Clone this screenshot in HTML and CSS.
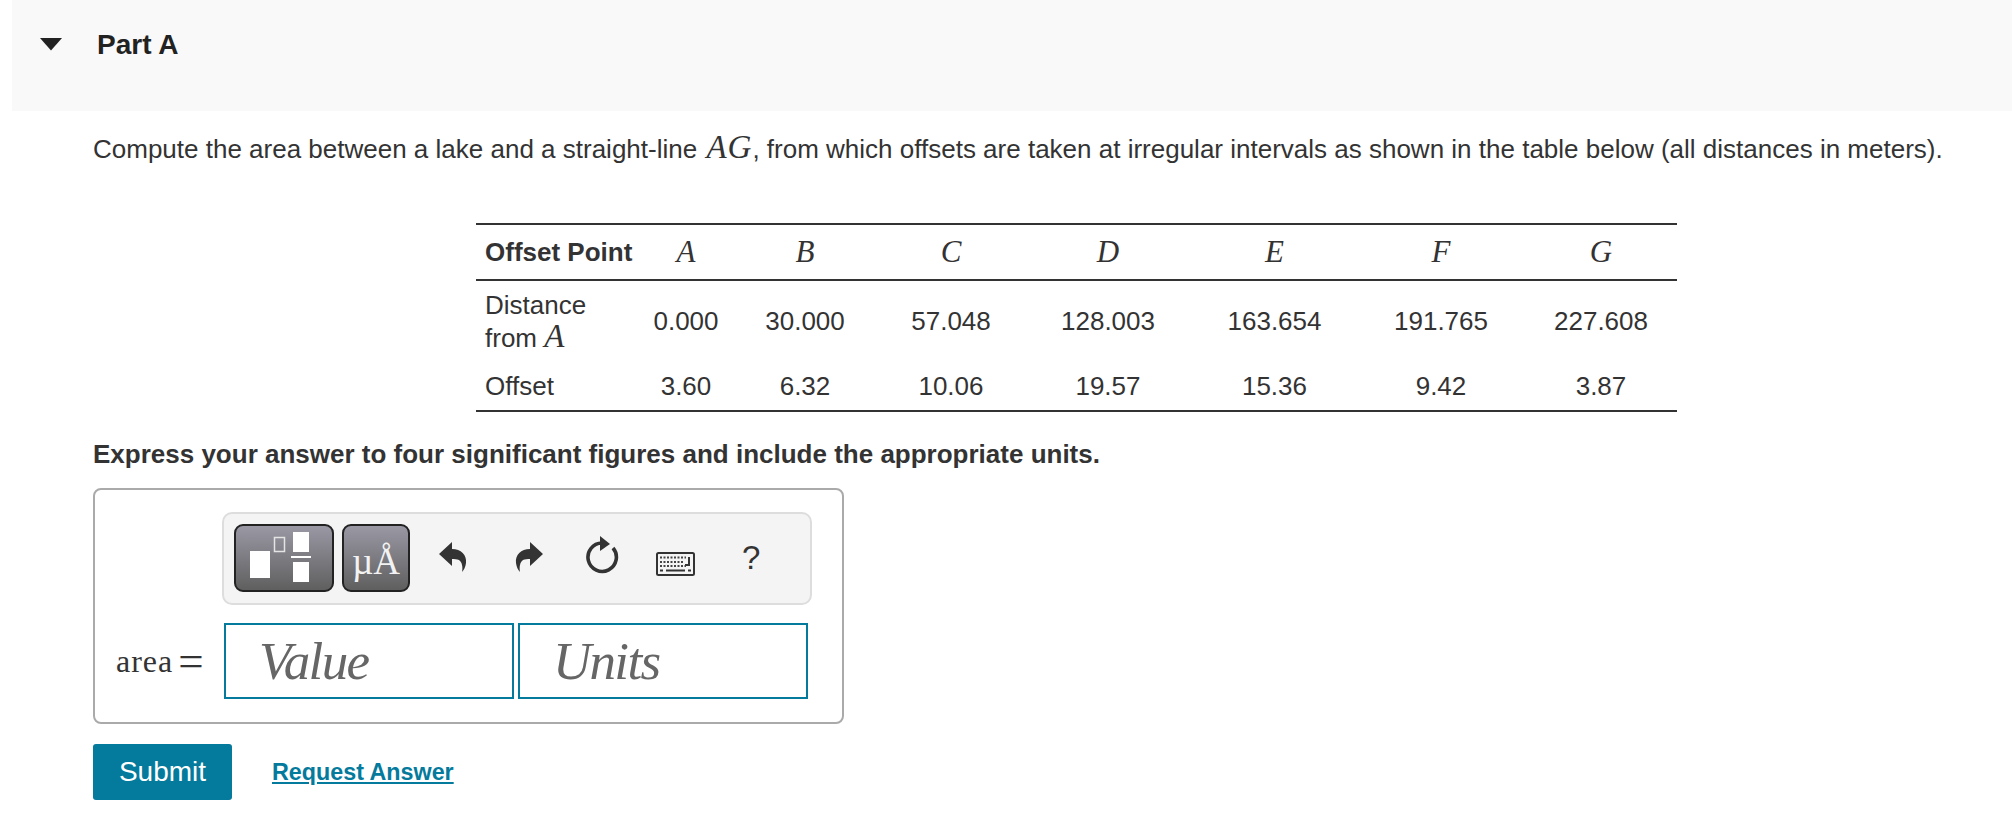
FILE: index.html
```html
<!DOCTYPE html>
<html lang="en">
<head>
<meta charset="utf-8">
<title>Part A</title>
<link rel="stylesheet" href="styles.css">
</head>
<body>
<header class="part-header">
  <svg class="caret" width="22" height="13" viewBox="0 0 22 13"><path d="M0 0H22L11 12.500Z" fill="#222"/></svg>
  <h2 class="part-title">Part A</h2>
</header>
<main class="content">
  <p class="prompt">Compute the area between a lake and a straight-line <span class="math inline-math">AG</span>, from which offsets are taken at irregular intervals as shown in the table below (all distances in meters).</p>
  <table class="data">
    <colgroup><col class="c0"><col class="c1"><col class="c2"><col class="c3"><col class="c4"><col class="c5"><col class="c6"><col class="c7"></colgroup>
    <thead>
      <tr><th class="row-head">Offset Point</th><th class="math">A</th><th class="math">B</th><th class="math">C</th><th class="math">D</th><th class="math">E</th><th class="math">F</th><th class="math">G</th></tr>
    </thead>
    <tbody>
      <tr class="dist"><td class="row-head">Distance<br>from <span class="math big">A</span></td><td>0.000</td><td>30.000</td><td>57.048</td><td>128.003</td><td>163.654</td><td>191.765</td><td>227.608</td></tr>
      <tr class="off"><td class="row-head">Offset</td><td>3.60</td><td>6.32</td><td>10.06</td><td>19.57</td><td>15.36</td><td>9.42</td><td>3.87</td></tr>
    </tbody>
  </table>
  <p class="instruction">Express your answer to four significant figures and include the appropriate units.</p>
  <section class="answer-box">
    <div class="toolbar">
      <button class="tool-btn templates" aria-label="Templates">
        <svg width="96" height="64" viewBox="2 2 96 64">
          <rect x="16" y="27" width="20" height="27" fill="#fff"/>
          <rect x="40.500" y="13.500" width="10" height="14" fill="none" stroke="#e4e4e4" stroke-width="1.500"/>
          <rect x="59" y="8" width="16" height="20" fill="#fff"/>
          <rect x="57" y="32" width="20" height="2" fill="#fff"/>
          <rect x="59" y="38" width="16" height="20" fill="#fff"/>
        </svg>
      </button>
      <button class="tool-btn units">µÅ</button>
      <div class="tool-icon first">
        <svg width="28" height="32" viewBox="0 0 28 32"><path d="M0 13L13 1V8C22 8 28 14 27 22C26.500 26 25 29 23 31C24 26 23 21 20 19C18 18 15.500 18 13 18V25Z" fill="#333"/></svg>
      </div>
      <div class="tool-icon second">
        <svg width="28" height="32" viewBox="0 0 28 32"><path d="M28 13L15 1V8C6 8 0 14 1 22C1.500 26 3 29 5 31C4 26 5 21 8 19C10 18 12.500 18 15 18V25Z" fill="#333"/></svg>
      </div>
      <div class="tool-icon third">
        <svg width="34" height="38" viewBox="0 0 34 38"><path d="M17 7A14.200 14.200 0 1 0 28 12" fill="none" stroke="#333" stroke-width="3.600"/><path d="M15 0L25 8L15 15Z" fill="#333"/></svg>
      </div>
      <div class="tool-icon fourth">
        <svg width="40" height="24" viewBox="0 0 40 24">
          <rect x="1" y="1" width="37" height="22" rx="1.500" fill="#f4f4f4" stroke="#333" stroke-width="2"/>
          <path d="M4 5.500H30M4 10H28M4 14H30" stroke="#444" stroke-width="2" stroke-dasharray="2 1.500"/>
          <path d="M33 5V13H29" fill="none" stroke="#333" stroke-width="2"/>
          <path d="M4 18.500H7M10 18.500H29M32 18.500H35" stroke="#333" stroke-width="2"/>
        </svg>
      </div>
      <div class="tool-help">?</div>
    </div>
    <div class="entry">
      <span class="entry-label">area<span class="eq">=</span></span>
      <div class="field value">Value</div>
      <div class="field unit">Units</div>
    </div>
  </section>
  <div class="actions">
    <button class="submit">Submit</button>
    <a class="request" href="#">Request Answer</a>
  </div>
</main>
</body>
</html>
```
FILE: styles.css
```css
* { box-sizing: border-box; }
html, body { margin: 0; padding: 0; background: #fff; }
body { font-family: "Liberation Sans", Arial, sans-serif; color: #333; width: 2012px; height: 816px; overflow: hidden; }

.part-header { margin-left: 12px; height: 111px; background: #f9f9f9; display: flex; align-items: flex-start; padding: 38px 0 0 28px; }
.caret { margin-top: 0; flex: none; }
.part-title { margin: -13px 0 0 35px; font-size: 28px; line-height: 40px; font-weight: 700; color: #222; }

.content { padding: 0 0 0 93px; }
.prompt { margin: 19px 0 0; font-size: 26px; line-height: 38px; white-space: nowrap; }
.math { font-family: "Liberation Serif", "Times New Roman", serif; font-style: italic; font-weight: 400; font-size: 31px; }
.inline-math { font-size: 33px; line-height: 30px; letter-spacing: 1px; margin: 0 0 0 2px; }

.data { margin: 55px 0 0 383px; width: 1201px; table-layout: fixed; border-collapse: collapse; border-top: 2px solid #333; border-bottom: 2px solid #333; font-size: 26px; }
.c0 { width: 164px; } .c1 { width: 92px; } .c2 { width: 146px; } .c3 { width: 146px; }
.c4 { width: 168px; } .c5 { width: 165px; } .c6 { width: 168px; } .c7 { width: 152px; }
.data th, .data td { padding: 0; text-align: center; vertical-align: middle; }
.data .row-head { text-align: left; padding-left: 9px; }
.data thead th { height: 56px; border-bottom: 2px solid #333; }
.data thead th.row-head { font-size: 26px; font-weight: 700; white-space: nowrap; }
.dist td { height: 82px; line-height: 31px; }
.off td { height: 49px; }
.big { font-size: 33px; }

.instruction { margin: 22px 0 0; font-size: 26px; line-height: 40px; font-weight: 700; }

.answer-box { margin-top: 14px; width: 751px; height: 236px; border: 2px solid #aaa; border-radius: 8px; padding: 22px 0 0 127px; }
.toolbar { width: 590px; height: 93px; background: #f4f4f4; border: 2px solid #ddd; border-radius: 10px; display: flex; align-items: flex-start; padding: 10px 0 0 10px; }
.tool-btn { height: 68px; border: 2px solid #222; border-radius: 9px; background: linear-gradient(#9a98a4, #5f5f5f); padding: 0; color: #fff; display: flex; align-items: center; justify-content: center; flex: none; }
.templates { width: 100px; }
.units { width: 68px; margin-left: 8px; font-family: "Liberation Serif", serif; font-size: 37px; color: #f2f2f2; padding-top: 6px; }
.tool-icon { display: flex; }
.first { margin: 17px 0 0 29px; }
.second { margin: 17px 0 0 48px; }
.third { margin: 12px 0 0 42px; }
.fourth { margin: 28px 0 0 37px; }
.tool-help { margin: 14px 0 0 46px; font-size: 33px; line-height: 40px; color: #333; }

.entry { display: flex; align-items: center; margin: 18px 0 0 -106px; }
.entry-label { width: 108px; display: flex; align-items: center; font-family: "Liberation Serif", serif; font-size: 32px; letter-spacing: 1px; white-space: nowrap; }
.eq { font-size: 45px; line-height: 30px; margin-left: 5px; letter-spacing: 0; }
.field { width: 290px; height: 76px; border: 2px solid #047a9c; background: #fff; font-family: "Liberation Serif", serif; font-style: italic; font-size: 53px; letter-spacing: -1.700px; line-height: 72px; color: #666; padding-left: 33px; }
.unit { margin-left: 4px; }

.actions { margin-top: 20px; display: flex; align-items: center; }
.submit { width: 139px; height: 56px; background: #047a9c; color: #fff; border: 0; border-radius: 3px; font-family: "Liberation Sans", sans-serif; font-size: 28px; padding: 0; }
.request { margin-left: 40px; color: #047a9c; font-size: 23.300px; font-weight: 700; text-decoration: underline; }
```
